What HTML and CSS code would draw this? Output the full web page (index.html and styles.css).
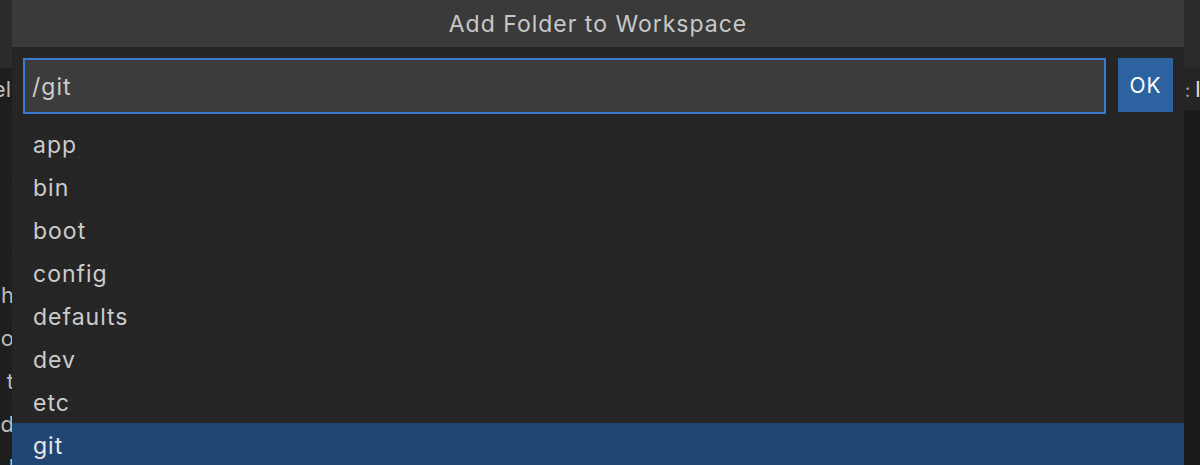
FILE: index.html
```html
<!DOCTYPE html>
<html lang="en">
<head>
    <meta charset="UTF-8">
    <meta name="viewport" content="width=device-width, initial-scale=1.0">
    <title>Add Folder to Workspace</title>
    <link rel="stylesheet" href="styles.css">
</head>
<body>
    <div class="screen">
        <!-- editor peeking out on the left -->
        <div class="side side-left">
            <div class="side-top"></div>
            <div class="side-lines">
                <div class="side-line first">el</div>
                <div class="side-gap"></div>
                <div class="side-line">h</div>
                <div class="side-line">o</div>
                <div class="side-line">t</div>
                <div class="side-line">d</div>
                <div class="side-line">l</div>
            </div>
        </div>

        <div class="dialog">
            <div class="dialog-title">Add Folder to Workspace</div>
            <div class="input-row">
                <input class="path-input" type="text" value="/git">
                <button class="ok-btn">OK</button>
            </div>
            <ul class="folder-list">
                <li>app</li>
                <li>bin</li>
                <li>boot</li>
                <li>config</li>
                <li>defaults</li>
                <li>dev</li>
                <li>etc</li>
                <li class="selected">git</li>
            </ul>
        </div>

        <!-- editor peeking out on the right -->
        <div class="side side-right">
            <div class="side-top"></div>
            <div class="side-bar">: <span class="side-mark">l</span></div>
            <div class="side-rest"></div>
        </div>
    </div>
</body>
</html>
```

FILE: styles.css
```css
body {
    margin: 0;
    padding: 0;
    background-color: #1e1e1e;
    font-family: Inter, "Noto Sans", sans-serif;
    color: #cccccc;
    overflow: hidden;
}
.screen {
    display: grid;
    grid-template-columns: 12px 1172px 16px;
    width: 1200px;
    height: 465px;
    overflow: hidden;
}

/* background editor strips */
.side {
    display: flex;
    flex-direction: column;
    overflow: hidden;
    background-color: #1e1e1e;
}
.side-top {
    height: 68px;
    flex: none;
    background-color: #2c2c2c;
}
.side-lines {
    display: flex;
    flex-direction: column;
    align-items: flex-end;
    font-size: 22px;
    line-height: 43px;
    color: #bdbdbd;
}
.side-line {
    height: 43px;
    margin-right: -2px;
}
.side-line.first {
    margin-right: 1px;
}
.side-gap {
    height: 163px;
}
.side-right .side-top {
    background-color: #2a2a2a;
}
.side-bar {
    height: 42px;
    flex: none;
    background-color: #252526;
    font-size: 18px;
    line-height: 42px;
    color: #a8a8a8;
    padding-left: 1px;
    white-space: nowrap;
}
.side-mark {
    color: #e0e0e0;
    font-size: 22px;
}
.side-rest {
    flex: 1;
    background-color: #1b1b1b;
}

/* quick input dialog */
.dialog {
    display: flex;
    flex-direction: column;
    background-color: #252526;
    background-image: radial-gradient(rgba(255, 255, 255, 0.04) 1px, transparent 1px);
    background-size: 9px 9px;
}
.dialog-title {
    height: 47px;
    flex: none;
    background-color: #3a3a3b;
    color: #c8c8c8;
    font-size: 23px;
    letter-spacing: 1px;
    line-height: 49px;
    text-align: center;
}
.input-row {
    display: flex;
    gap: 12px;
    padding: 11px 11px 0 11px;
}
.path-input {
    flex: 1;
    height: 56px;
    box-sizing: border-box;
    margin: 0;
    padding: 2px 0 0 7px;
    border: 2px solid #3a7bd0;
    background-color: #3c3c3c;
    color: #cccccc;
    font-family: Inter, "Noto Sans", sans-serif;
    font-size: 23px;
    letter-spacing: 1px;
    outline: none;
}
.ok-btn {
    width: 55px;
    height: 54px;
    margin: 0;
    padding: 0;
    border: none;
    background-color: #2d62a1;
    color: #ffffff;
    font-family: Inter, "Noto Sans", sans-serif;
    font-size: 21px;
    letter-spacing: 1px;
}
.folder-list {
    list-style: none;
    margin: 8px 0 0 0;
    padding: 0;
}
.folder-list li {
    height: 43px;
    line-height: 46px;
    padding-left: 21px;
    font-size: 23px;
    letter-spacing: 1px;
    color: #cccccc;
}
.folder-list li.selected {
    background-color: #214673;
    color: #e8e8e8;
}
```
